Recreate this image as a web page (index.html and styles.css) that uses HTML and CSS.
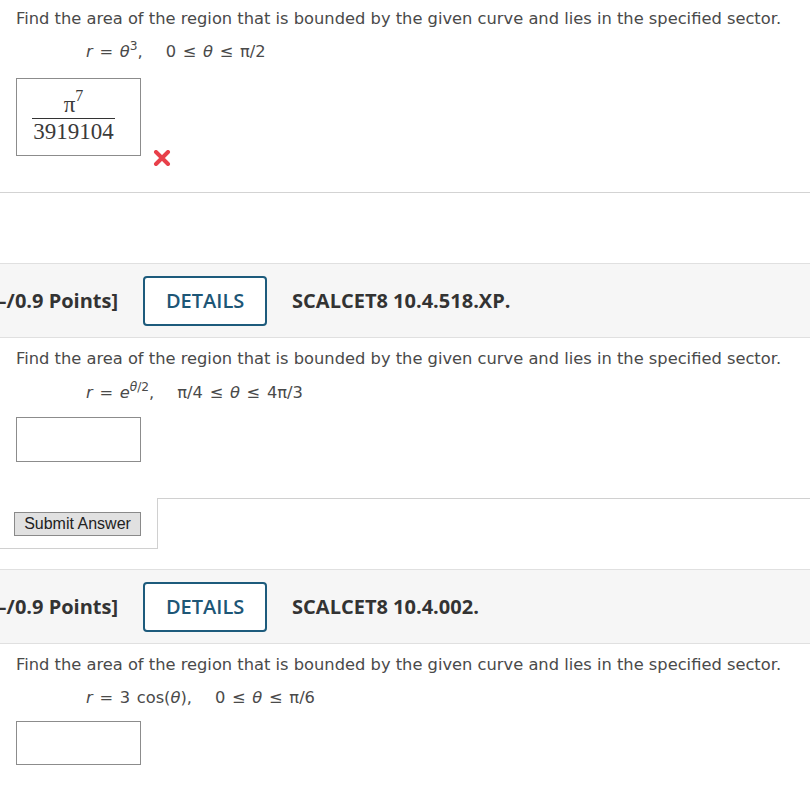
FILE: index.html
```html
<!DOCTYPE html>
<html>
<head>
<meta charset="utf-8">
<link rel="stylesheet" href="styles.css">
</head>
<body>
<section class="question first">
  <p class="prompt">Find the area of the region that is bounded by the given curve and lies in the specified sector.</p>
  <p class="formula"><i>r</i> = <i>θ</i><sup>3</sup>,<span class="gap"></span>0 ≤ <i>θ</i> ≤ <span class="pi">π</span>/2</p>
  <div class="answer-row">
    <div class="answer filled">
      <div class="frac">
        <span class="num">π<sup>7</sup></span>
        <span class="den">3919104</span>
      </div>
    </div>
    <svg class="wrong" width="18" height="16" viewBox="0 0 18 16"><path d="M3 2 L15 14 M15 2 L3 14" stroke="#e8404a" stroke-width="4" stroke-linecap="round"/></svg>
  </div>
</section>
<div class="rule"></div>

<header class="qhead">
  <span class="points">[–/0.9 Points]</span>
  <button class="details">DETAILS</button>
  <span class="code">SCALCET8 10.4.518.XP.</span>
</header>
<section class="question">
  <p class="prompt">Find the area of the region that is bounded by the given curve and lies in the specified sector.</p>
  <p class="formula sup-line"><i>r</i> = <i>e</i><sup><i>θ</i>/2</sup>,<span class="gap"></span><span class="pi">π</span>/4 ≤ <i>θ</i> ≤ 4<span class="pi">π</span>/3</p>
  <div class="answer"></div>
  <div class="submit-row">
    <div class="submit-cell"><button class="submit">Submit Answer</button></div>
    <div class="submit-side"></div>
  </div>
</section>

<header class="qhead second">
  <span class="points">[–/0.9 Points]</span>
  <button class="details">DETAILS</button>
  <span class="code">SCALCET8 10.4.002.</span>
</header>
<section class="question last">
  <p class="prompt">Find the area of the region that is bounded by the given curve and lies in the specified sector.</p>
  <p class="formula"><i>r</i> = 3 cos(<i>θ</i>),<span class="gap"></span>0 ≤ <i>θ</i> ≤ <span class="pi">π</span>/6</p>
  <div class="answer"></div>
</section>
</body>
</html>
```

FILE: styles.css
```css
html, body {
  margin: 0;
  padding: 0;
  background: #fff;
  overflow: hidden;
}
body {
  width: 810px;
  font-family: "DejaVu Sans", Verdana, sans-serif;
  color: #4a4a4a;
  font-size: 16.3px;
}
.question {
  padding: 0 16px;
}
.prompt {
  margin: 0;
  line-height: 20px;
  padding-top: 11px;
  white-space: nowrap;
}
.first .prompt {
  padding-top: 9px;
}
.formula {
  margin: 13px 0 0 70px;
  line-height: 20px;
  white-space: nowrap;
  word-spacing: 1.5px;
}
.formula.sup-line {
  margin-top: 14px;
}
.formula i {
  font-style: italic;
}
.formula sup {
  font-size: 0.75em;
  line-height: 0;
  vertical-align: 0.55em;
  word-spacing: 0;
}
.gap {
  display: inline-block;
  width: 23px;
}
.answer {
  box-sizing: border-box;
  width: 125px;
  height: 45px;
  border: 1px solid #8c8c8c;
  margin-top: 14px;
}
.last .answer {
  margin-top: 13px;
  height: 44px;
}
.answer-row {
  display: flex;
  align-items: flex-end;
  margin-top: 16px;
}
.answer.filled {
  height: 78px;
  margin-top: 0;
  display: flex;
  justify-content: center;
  padding-top: 13px;
  padding-right: 10px;
}
.frac {
  display: flex;
  flex-direction: column;
  align-items: center;
  font-family: "Liberation Serif", "Times New Roman", serif;
  font-size: 23px;
  color: #3a3a3a;
}
.num {
  line-height: 26px;
  font-size: 23px;
}
.num sup {
  font-size: 16px;
  line-height: 0;
  vertical-align: 0.7em;
}
.den {
  border-top: 1px solid #333;
  padding: 1px 1px 0;
  line-height: 24px;
}
.wrong {
  margin-left: 12px;
  margin-bottom: -10px;
}
.rule {
  height: 1px;
  background: #d3d3d3;
  margin-top: 36px;
}
.qhead {
  box-sizing: border-box;
  height: 75px;
  margin-top: 70px;
  background: #f6f6f6;
  border-top: 1px solid #e0e0e0;
  border-bottom: 1px solid #e0e0e0;
  display: flex;
  align-items: center;
  font-family: "Open Sans", sans-serif;
  font-size: 20px;
  color: #333;
}
.qhead.second {
  margin-top: 20px;
}
.points {
  font-weight: 700;
  margin-left: -10px;
  white-space: nowrap;
}
.details {
  box-sizing: border-box;
  width: 124px;
  height: 50px;
  margin-left: 25px;
  border: 2px solid #1d5b7c;
  border-radius: 4px;
  background: #fff;
  font-family: "Open Sans", sans-serif;
  font-size: 20px;
  color: #1d5676;
  font-weight: 600;
  padding: 0;
}
.code {
  margin-left: 25px;
  font-weight: 700;
  white-space: nowrap;
}
.submit-row {
  display: flex;
  margin: 36px -16px 0;
}
.submit-cell {
  width: 157px;
  height: 51px;
  box-sizing: border-box;
  border-bottom: 1px solid #d0d0d0;
  padding: 14px 0 0 14px;
}
.submit-side {
  flex: 1;
  border-top: 1px solid #d0d0d0;
  border-left: 1px solid #d0d0d0;
  height: 51px;
  box-sizing: border-box;
}
.submit {
  box-sizing: border-box;
  width: 127px;
  height: 24px;
  background: #e1e1e1;
  border: 1px solid #8a8a8a;
  font-family: "Liberation Sans", Arial, sans-serif;
  font-size: 16px;
  color: #222;
  padding: 0;
  border-radius: 0;
}
```
